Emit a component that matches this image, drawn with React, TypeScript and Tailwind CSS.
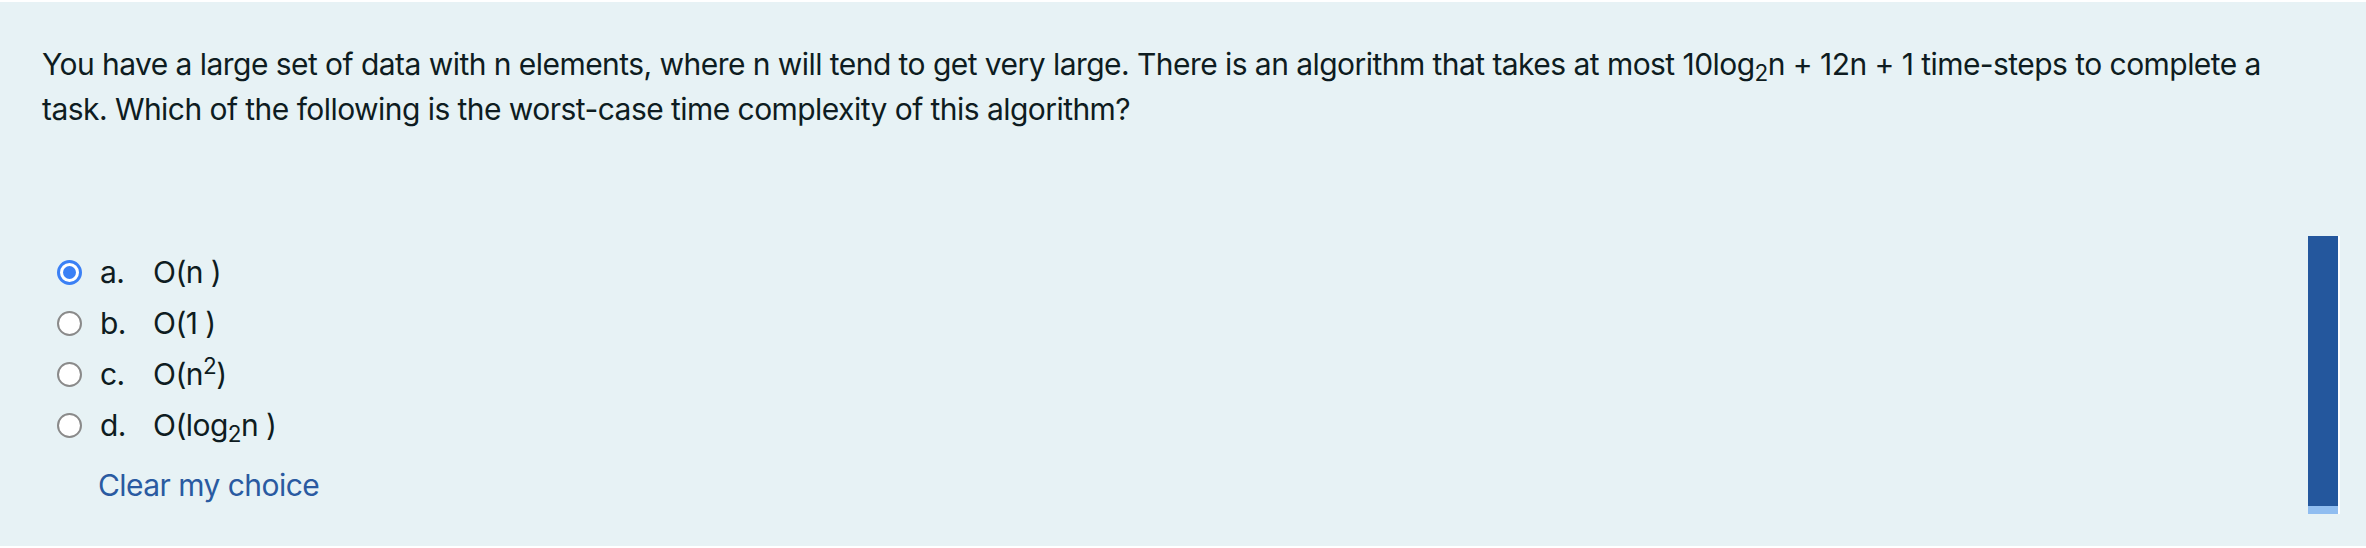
import React from 'react';

type Choice = {
  letter: string;
  label: React.ReactNode;
  checked?: boolean;
};

const choices: Choice[] = [
  { letter: 'a.', label: <>O(n )</>, checked: true },
  { letter: 'b.', label: <>O(1 )</> },
  { letter: 'c.', label: <>O(n<sup>2</sup>)</> },
  { letter: 'd.', label: <>O(log<sub>2</sub>n )</> },
];

const Radio = ({ checked }: { checked?: boolean }) =>
  checked ? (
    <span className="w-[25px] h-[25px] rounded-full border-[3px] border-[#3b80f5] bg-white flex items-center justify-center shrink-0">
      <span className="w-[13px] h-[13px] rounded-full bg-[#3b80f5]" />
    </span>
  ) : (
    <span className="w-[25px] h-[25px] rounded-full border-2 border-[#8a8a8a] bg-white shrink-0" />
  );

export default function App() {
  return (
    <div className="w-[2366px] h-[548px] bg-white py-[2px] font-['Inter','Noto_Sans',sans-serif]">
      <div className="relative h-full bg-[#e7f2f5] text-[#0e1c21] text-[30px] leading-[45px] tracking-[-0.55px] pt-[40px] pl-[42px]">
        {/* question text */}
        <p className="w-[2250px]">
          You have a large set of data with n elements, where n will tend to get very large. There is an algorithm that
          takes at most 10log<sub>2</sub>n + 12n + 1 time-steps to complete a task. Which of the following is the
          worst-case time complexity of this algorithm?
        </p>

        {/* answers */}
        <div className="mt-[115px] flex flex-col">
          {choices.map((c) => (
            <label key={c.letter} className="flex items-center h-[51px] pl-[15px]">
              <Radio checked={c.checked} />
              <span className="ml-[18px] w-[53px]">{c.letter}</span>
              <span>{c.label}</span>
            </label>
          ))}
        </div>

        <div className="mt-[12px] pl-[56px]">
          <a className="text-[#2a5aa1]">Clear my choice</a>
        </div>

        {/* right side progress bar */}
        <div className="absolute right-[26px] top-[234px] w-[32px] h-[278px] flex bg-white pr-[2px]">
          <div className="flex-1 flex flex-col">
            <div className="flex-1 bg-[#24579d]" />
            <div className="h-[8px] bg-[#90bdf0]" />
          </div>
        </div>
      </div>
    </div>
  );
}
